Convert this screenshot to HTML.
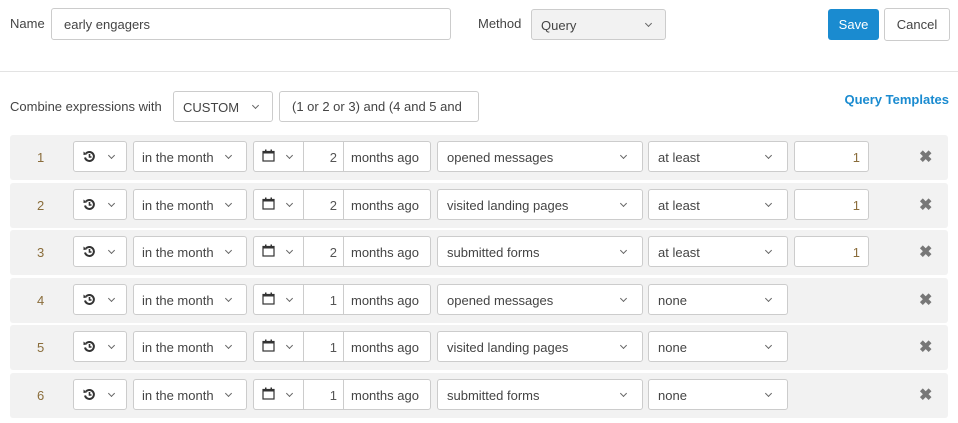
<!DOCTYPE html><html><head><style>
body{margin:0;width:958px;height:423px;background:#fff;font-family:"Liberation Sans",sans-serif;font-size:13px;color:#444;position:relative;overflow:hidden}
.a{position:absolute;box-sizing:border-box}
.b{border:1px solid #ccc;border-radius:3px;background:#fff;line-height:29px;height:31px}
.ch{position:absolute;width:4px;height:4px;border-right:1px solid #666;border-bottom:1px solid #666;transform:rotate(45deg)}
.row{position:absolute;left:10px;width:938px;height:45px;background:#f2f2f2;border-radius:3px}
.x{position:absolute;left:909px;top:12px;font-size:16px;color:#777;font-weight:bold}
</style></head><body>
<div class="a" style="left:10px;top:16px">Name</div>
<div class="a b" style="left:51px;top:8px;width:400px;height:32px;line-height:31px;padding-left:12px">early engagers</div>
<div class="a" style="left:478px;top:16px">Method</div>
<div class="a b" style="left:531px;top:9px;width:135px;background:#f2f2f2;padding-left:9px;line-height:31px">Query<span class="ch" style="left:114px;top:11px"></span></div>
<div class="a" style="left:828px;top:9px;width:51px;height:31px;background:#1a8bd0;border-radius:3px;color:#fff;text-align:center;line-height:31px">Save</div>
<div class="a b" style="left:884px;top:8px;width:66px;height:33px;line-height:32px;text-align:center">Cancel</div>
<div class="a" style="left:0;top:71px;width:958px;height:1px;background:#e3e3e3"></div>
<div class="a" style="left:10px;top:99px">Combine expressions with</div>
<div class="a b" style="left:173px;top:91px;width:100px;padding-left:9px;line-height:31px">CUSTOM<span class="ch" style="left:79px;top:11px"></span></div>
<div class="a b" style="left:279px;top:91px;width:200px;padding-left:12px;line-height:30px">(1 or 2 or 3) and (4 and 5 and</div>
<div class="a" style="right:9px;top:92px;color:#1a8bd0;font-weight:bold">Query Templates</div>
<div id="rows"></div>
<script>
var d=[["2","opened messages","at least",1],["2","visited landing pages","at least",1],["2","submitted forms","at least",1],["1","opened messages","none",0],["1","visited landing pages","none",0],["1","submitted forms","none",0]];
var tops=[135,183,230,278,325,373],h="";
d.forEach(function(r,i){
h+='<div class="row" style="top:'+tops[i]+'px"><div class="a" style="left:27px;top:15px;color:#8a6d3b">'+(i+1)+'</div>'+
'<div class="a b" style="left:63px;top:6px;width:54px;line-height:31px"><svg class="a" style="left:9px;top:8px" width="13" height="13" viewBox="0 0 13 13"><path d="M3 3.5A4.5 4.5 0 1 1 2 7.5" fill="none" stroke="#333" stroke-width="2"/><path d="M0.5 1.5L4 4.5L0.5 5z" fill="#333"/><path d="M6.5 4v3h2" fill="none" stroke="#333" stroke-width="1.6"/></svg><span class="ch" style="left:35px;top:11px"></span></div>'+
'<div class="a b" style="left:123px;top:6px;width:114px;padding-left:8px;line-height:31px">in the month<span class="ch" style="left:92px;top:11px"></span></div>'+
'<div class="a b" style="left:243px;top:6px;width:178px;background:#fff;line-height:31px"><svg class="a" style="left:8px;top:7px" width="13" height="13" viewBox="0 0 13 13"><rect x="1" y="2.5" width="11" height="9.5" fill="none" stroke="#333" stroke-width="1.2"/><rect x="1" y="2.5" width="11" height="2" fill="#333"/><rect x="3" y="0.5" width="1.5" height="3" fill="#333"/><rect x="8.5" y="0.5" width="1.5" height="3" fill="#333"/></svg><span class="ch" style="left:33px;top:11px"></span>'+
'<div class="a" style="left:49px;top:-1px;width:1px;height:31px;background:#ccc"></div><div class="a" style="left:50px;width:39px;text-align:right;padding-right:6px;color:#555">'+r[0]+'</div><div class="a" style="left:89px;top:-1px;width:1px;height:31px;background:#ccc"></div><div class="a" style="left:97px">months ago</div></div>'+
'<div class="a b" style="left:427px;top:6px;width:206px;padding-left:9px;line-height:31px">'+r[1]+'<span class="ch" style="left:183px;top:11px"></span></div>'+
'<div class="a b" style="left:638px;top:6px;width:140px;padding-left:9px;line-height:31px">'+r[2]+'<span class="ch" style="left:117px;top:11px"></span></div>'+
(r[3]?'<div class="a b" style="left:784px;top:6px;width:75px;text-align:right;padding-right:8px;color:#8a6d3b;line-height:31px">1</div>':'')+
'<div class="x">&#10006;</div></div>';});
document.getElementById("rows").innerHTML=h;
</script>
</body></html>
